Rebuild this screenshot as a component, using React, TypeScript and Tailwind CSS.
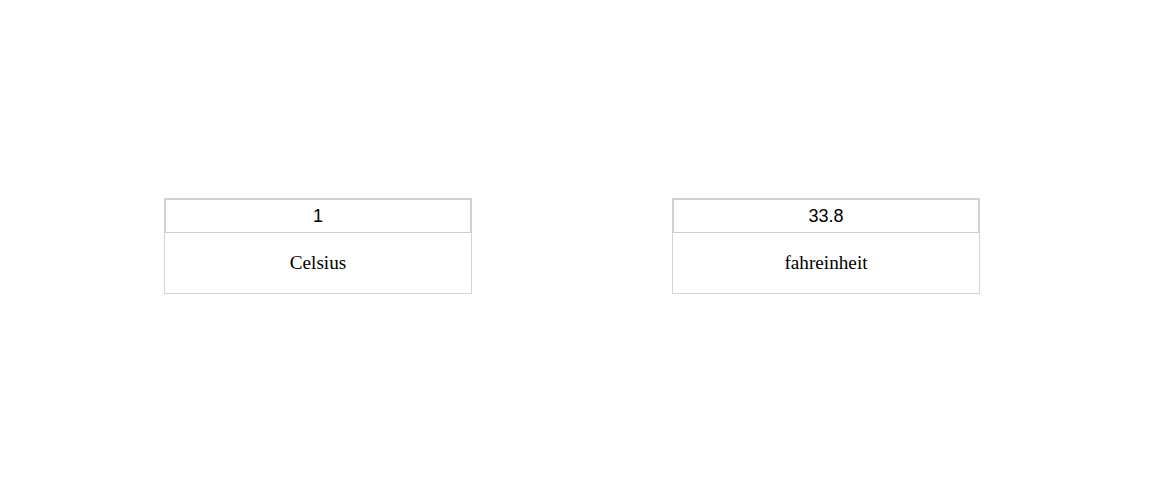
import React, { useState } from "react";

function Box({ value, label }: { value: string; label: string }) {
  const [v, setV] = useState(value);
  return (
    <div className="w-[308px] border border-[#d3d3d3] bg-white">
      <input
        value={v}
        onChange={(e) => setV(e.target.value)}
        className="block w-full h-[34px] border border-[#cfcfcf] text-center text-[18px] text-black outline-none"
        style={{ fontFamily: '"Liberation Sans", Arial, sans-serif' }}
      />
      <div
        className="h-[60px] flex items-center justify-center text-[19.2px] text-black"
        style={{ fontFamily: '"Liberation Serif", "Times New Roman", serif' }}
      >
        {label}
      </div>
    </div>
  );
}

export default function App() {
  return (
    <div className="w-[1153px] h-[496px] bg-white flex items-start gap-[200px] pl-[164px] pt-[198px]">
      <Box value="1" label="Celsius" />
      <Box value="33.8" label="fahreinheit" />
    </div>
  );
}
